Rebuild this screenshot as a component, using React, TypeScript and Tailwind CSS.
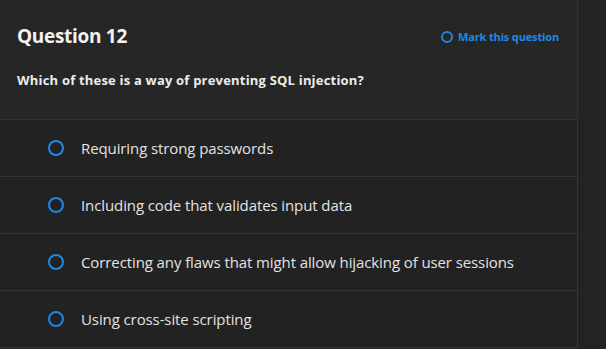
const options = [
  "Requiring strong passwords",
  "Including code that validates input data",
  "Correcting any flaws that might allow hijacking of user sessions",
  "Using cross-site scripting",
];

export default function App() {
  return (
    <div className="w-[606px] h-[349px] bg-[#232323] flex overflow-hidden" style={{ fontFamily: "'Open Sans', sans-serif" }}>
      <div className="w-[578px] h-[348px] border-r border-b border-[#343434] flex flex-col">
        <div className="h-[120px] shrink-0 bg-[#262626] border-b border-[#343434] pl-[17px] pr-[18px] pt-[22px]">
          <div className="flex items-center justify-between">
            <h2 className="text-[19px] font-bold text-[#f2f2f2] tracking-[-0.3px]">Question 12</h2>
            <button className="flex items-center gap-[5px] mt-[2px] text-[11px] font-bold text-[#1e88e5] tracking-[-0.15px]">
              <span className="w-[12px] h-[12px] rounded-full border-[2px] border-[#1e88e5]" />
              Mark this question
            </button>
          </div>
          <p className="mt-[20px] text-[13px] font-bold text-[#ececec] tracking-[0.2px]">Which of these is a way of preventing SQL injection?</p>
        </div>
        {options.map((o, i) => (
          <div
            key={o}
            className={`bg-[#222222] flex items-center pl-[48px] ${i < options.length - 1 ? "h-[57px] shrink-0 border-b border-[#343434]" : "flex-1"}`}
          >
            <span className="w-[16px] h-[16px] rounded-full border-[2.5px] border-[#1e88e5] shrink-0" />
            <span className="ml-[17px] text-[15px] text-[#e2e2e2] tracking-[-0.1px]">{o}</span>
          </div>
        ))}
      </div>
    </div>
  );
}
